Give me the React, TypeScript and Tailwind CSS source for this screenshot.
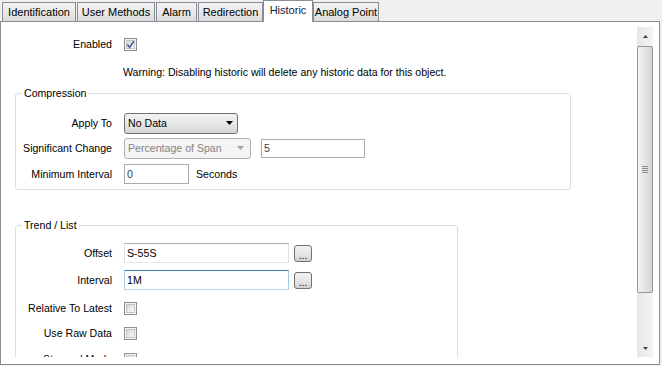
import React from 'react';

const tabs = [
  { name: 'Identification', cls: 'w-[74px] ml-[2px]' },
  { name: 'User Methods', cls: 'w-[78px] ml-[1px]' },
  { name: 'Alarm', cls: 'w-[41px] ml-[1px]' },
  { name: 'Redirection', cls: 'w-[65px] ml-[1px]' },
  { name: 'Historic', cls: 'w-[50px]', active: true },
  { name: 'Analog Point', cls: 'w-[66px]' },
];

const Check: React.FC<{ checked?: boolean }> = ({ checked }) => (
  <div className="w-[13px] h-[13px] border border-[#8f8f8f] bg-[#f4f4f4] p-px shrink-0">
    <div className="relative w-full h-full border border-[#c4c4c4] bg-gradient-to-br from-[#d6d6d6] to-[#fbfbfb]">
      {checked && (
        <svg className="absolute -left-[2px] -top-[2px]" width="11" height="11" viewBox="0 0 11 11">
          <path d="M2.4 5.6 L4.6 8.4 L8.8 2.2" fill="none" stroke="#4a5d8f" strokeWidth="1.6" />
        </svg>
      )}
    </div>
  </div>
);

const Arrow: React.FC<{ color: string }> = ({ color }) => (
  <svg width="7" height="4" viewBox="0 0 7 4">
    <polygon points="0,0 7,0 3.5,4" fill={color} />
  </svg>
);

const Label: React.FC<{ w: string; children: React.ReactNode }> = ({ w, children }) => (
  <div className={`${w} text-right shrink-0 whitespace-nowrap`}>{children}</div>
);

const DotsButton = () => (
  <div className="ml-[5px] w-[18px] h-[17px] rounded-[3px] border border-[#707070] bg-gradient-to-b from-[#f2f2f2] via-[#e6e6e6] to-[#d2d2d2] flex items-end justify-center pb-[2px] leading-[6px] text-[10px]">
    ...
  </div>
);

const App: React.FC = () => {
  return (
    <div className="w-[662px] h-[366px] bg-[#f0f0f0] font-['Liberation_Sans',Arial,sans-serif] text-[11px] leading-[13px] text-black overflow-hidden">
      {/* tab strip */}
      <div className="h-[21px] flex items-end relative z-10">
        {tabs.map((t) =>
          t.active ? (
            <div
              key={t.name}
              className={`${t.cls} h-[22px] -mb-px bg-white border border-b-0 border-[#898c95] flex justify-center pt-[3px] text-[#1a1a40]`}
            >
              {t.name}
            </div>
          ) : (
            <div
              key={t.name}
              className={`${t.cls} h-[19px] border border-b-0 border-[#898c95] bg-gradient-to-b from-[#f4f4f4] via-[#e9e9e9] to-[#dcdcdc] flex justify-center pt-[3px]`}
            >
              {t.name}
            </div>
          )
        )}
      </div>

      {/* panel */}
      <div className="w-[660px] h-[344px] border border-[#898c95] bg-white flex pt-[5px] pb-[7px] pr-[6px] text-[10.6px]">
        <div className="flex-1 overflow-hidden">
          <div className="mt-[7px] h-[20px] flex items-center">
            <Label w="w-[111px]">Enabled</Label>
            <div className="ml-[12px]">
              <Check checked />
            </div>
          </div>
          <div className="mt-[10px] h-[16px] flex items-center pl-[122px]">
            Warning: Disabling historic will delete any historic data for this object.
          </div>

          <fieldset className="mt-[7px] ml-[14px] w-[556px] border border-[#d5dfe5] rounded-[3px] px-0 pb-[4px]">
            <legend className="ml-[6px] px-[2px] leading-[13px]">Compression</legend>
            <div className="mt-[12px] h-[22px] flex items-center">
              <Label w="w-[96px]">Apply To</Label>
              <div className="ml-[12px] w-[114px] h-[21px] rounded-[3px] border border-[#707070] bg-gradient-to-b from-[#f2f2f2] via-[#e8e8e8] to-[#d4d4d4] flex items-center pl-[3px] pr-[4px] justify-between">
                <span>No Data</span>
                <Arrow color="#000" />
              </div>
            </div>
            <div className="mt-[3px] h-[22px] flex items-center">
              <Label w="w-[96px]">Significant Change</Label>
              <div className="ml-[12px] w-[127px] h-[21px] rounded-[3px] border border-[#adb2b5] bg-[#f4f4f4] flex items-center pl-[3px] pr-[6px] justify-between text-[#838383]">
                <span>Percentage of Span</span>
                <Arrow color="#a5a5a5" />
              </div>
              <div className="ml-[10px] w-[104px] h-[19px] border border-[#acacac] bg-white flex items-center pl-[2px] text-[#3a3a4a]">
                5
              </div>
            </div>
            <div className="mt-[4px] h-[22px] flex items-center">
              <Label w="w-[96px]">Minimum Interval</Label>
              <div className="ml-[12px] w-[65px] h-[20px] border border-[#acacac] bg-white flex items-center pl-[2px] text-[#3a3a4a]">
                0
              </div>
              <span className="ml-[7px]">Seconds</span>
            </div>
          </fieldset>

          <fieldset className="mt-[29px] ml-[14px] w-[443px] border border-[#d5dfe5] rounded-[3px] px-0 pb-[4px]">
            <legend className="ml-[6px] px-[2px] leading-[13px]">Trend / List</legend>
            <div className="mt-[10px] h-[22px] flex items-center">
              <Label w="w-[96px]">Offset</Label>
              <div className="ml-[12px] w-[165px] h-[20px] border border-[#dbdfe6] border-t-[#abadb3] border-b-[#e3e9ef] bg-white flex items-center pl-[2px]">
                S-55S
              </div>
              <DotsButton />
            </div>
            <div className="mt-[5px] h-[22px] flex items-center">
              <Label w="w-[96px]">Interval</Label>
              <div className="ml-[12px] w-[165px] h-[20px] border border-[#a4c9e3] border-t-[#3d7bad] border-b-[#b7d9ed] bg-white flex items-center pl-[2px]">
                1M
              </div>
              <DotsButton />
            </div>
            <div className="mt-[6px] h-[22px] flex items-center">
              <Label w="w-[96px]">Relative To Latest</Label>
              <div className="ml-[12px]">
                <Check />
              </div>
            </div>
            <div className="mt-[3px] h-[22px] flex items-center">
              <Label w="w-[96px]">Use Raw Data</Label>
              <div className="ml-[12px]">
                <Check />
              </div>
            </div>
            <div className="mt-[4px] h-[22px] flex items-center">
              <Label w="w-[96px]">Stepped Mode</Label>
              <div className="ml-[12px]">
                <Check />
              </div>
            </div>
          </fieldset>
        </div>

        {/* scrollbar */}
        <div className="w-[16px] flex flex-col bg-gradient-to-r from-[#e6e6e6] to-[#f4f4f4]">
          <div className="h-[19px] flex items-center justify-center">
            <svg width="5" height="3" viewBox="0 0 5 3">
              <polygon points="0,3 5,3 2.5,0" fill="#404040" />
            </svg>
          </div>
          <div className="h-[247px] rounded-[2px] border border-[#979797] bg-gradient-to-r from-[#f4f4f4] via-[#e4e4e4] to-[#d4d4d4] flex flex-col items-center justify-center gap-px">
            <div className="w-[6px] h-px bg-[#8c8c8c]" />
            <div className="w-[6px] h-px bg-[#8c8c8c]" />
            <div className="w-[6px] h-px bg-[#8c8c8c]" />
            <div className="w-[6px] h-px bg-[#8c8c8c]" />
          </div>
          <div className="flex-1" />
          <div className="h-[18px] flex items-center justify-center">
            <svg width="5" height="3" viewBox="0 0 5 3">
              <polygon points="0,0 5,0 2.5,3" fill="#404040" />
            </svg>
          </div>
        </div>
      </div>
    </div>
  );
};

export default App;
